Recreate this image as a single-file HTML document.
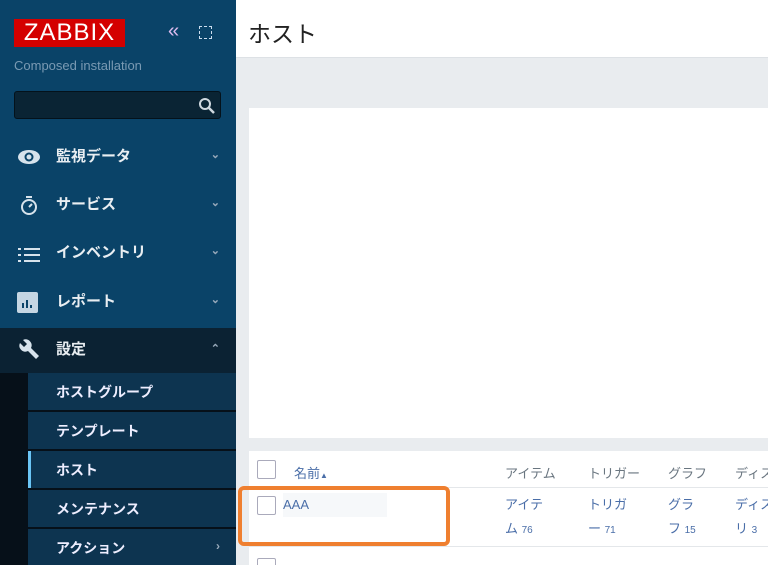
<!DOCTYPE html><html><head><meta charset="utf-8"><style>
*{margin:0;padding:0;box-sizing:border-box}
html,body{width:768px;height:565px;overflow:hidden}
body{position:relative;background:#e9ecef;font-family:"Liberation Sans","Noto Sans CJK JP",sans-serif}
.sb{position:absolute;left:0;top:0;width:236px;height:565px;background:#0a4368}
.logo{position:absolute;left:14px;top:19px;width:111px;height:28px;background:#d40000;color:#fff;font-size:24px;line-height:28px;text-align:center;letter-spacing:1px}
.sub{position:absolute;left:14px;top:58px;color:#7a9ab3;font-size:13px}
.srch{position:absolute;left:14px;top:91px;width:207px;height:28px;background:#0a2434;border:1px solid #04121b;border-radius:3px}
.mi{position:absolute;left:0;width:236px;height:48px;color:#e9eef2;font-size:15px;font-weight:bold;white-space:nowrap}
.mi .t{position:absolute;left:56px;top:13px;line-height:20px}
.mi .c{position:absolute;right:16px;top:14px;font-size:11px;color:#9ab}
.set{background:#0b2233}
.subm{position:absolute;left:0;top:373px;width:236px;height:192px;background:#061019;overflow:hidden}
.si{position:absolute;left:28px;width:208px;height:37px;background:#0d3450;color:#eef;font-size:14px;font-weight:bold;padding:9px 0 0 28px;white-space:nowrap}
.hdr{position:absolute;left:236px;top:0;width:532px;height:58px;background:#fff;border-bottom:1px solid #dde1e5}
.hdr span{position:absolute;left:12px;top:15px;font-size:23px;color:#222}
.p1{position:absolute;left:249px;top:108px;width:519px;height:330px;background:#fff}
.p2{position:absolute;left:249px;top:451px;width:519px;height:114px;background:#fff}
.cb{position:absolute;width:19px;height:19px;border:1px solid #aab;border-radius:2px;background:#fff}
.th{position:absolute;top:463px;font-size:13px;color:#6a7680;white-space:nowrap}
.td{position:absolute;font-size:13px;color:#4a6ea8;line-height:24px;white-space:nowrap}
.td small{font-size:10px}
</style></head><body>
<div class="sb">
<div class="logo">ZABBIX</div>
<div style="position:absolute;left:168px;top:20px;color:#dbe;font-size:20px">«</div>
<div style="position:absolute;left:199px;top:26px;width:13px;height:13px;border:1px dashed #cde"></div>
<div class="sub">Composed installation</div>
<div class="srch"><svg style="position:absolute;right:5px;top:5px" width="17" height="17" viewBox="0 0 17 17"><circle cx="7" cy="7" r="5" fill="none" stroke="#cfd8df" stroke-width="2"/><path d="M11 11l5 5" stroke="#cfd8df" stroke-width="2.5"/></svg></div>
<div class="mi" style="top:134px"><svg style="position:absolute;left:17px;top:15px" width="24" height="16"><ellipse cx="12" cy="8" rx="11" ry="7" fill="#d7e3ec"/><circle cx="12" cy="8" r="4.5" fill="#0a4368"/><circle cx="12" cy="8" r="2.5" fill="#d7e3ec"/></svg><span class="t">監視データ</span><span class="c">⌄</span></div>
<div class="mi" style="top:182px"><svg style="position:absolute;left:19px;top:13px" width="20" height="22"><circle cx="10" cy="12" r="7" fill="none" stroke="#d7e3ec" stroke-width="2"/><path d="M7 2h6M10 12l3-3" stroke="#d7e3ec" stroke-width="2"/></svg><span class="t">サービス</span><span class="c">⌄</span></div>
<div class="mi" style="top:230px"><svg style="position:absolute;left:18px;top:18px" width="22" height="14"><path d="M0 1h3M6 1h16M0 7h3M6 7h16M0 13h3M6 13h16" stroke="#d7e3ec" stroke-width="2"/></svg><span class="t">インベントリ</span><span class="c">⌄</span></div>
<div class="mi" style="top:279px"><div style="position:absolute;left:17px;top:13px;width:21px;height:21px;background:#c5d6e3;border-radius:2px"></div><svg style="position:absolute;left:17px;top:13px" width="21" height="21"><path d="M6 16v-5M10 16v-8M14 16v-3" stroke="#0a4368" stroke-width="2"/></svg><span class="t">レポート</span><span class="c">⌄</span></div>
<div class="mi set" style="top:328px;height:45px"><svg style="position:absolute;left:17px;top:11px" width="24" height="24"><path d="M3 4a6 6 0 0 0 8 8l8 8 3-3-8-8a6 6 0 0 0-8-8l4 4-3 3z" fill="#d7e3ec"/></svg><span class="t" style="top:12px">設定</span><span class="c">⌃</span></div>
</div>
<div class="subm">
<div class="si" style="top:0">ホストグループ</div>
<div class="si" style="top:39px">テンプレート</div>
<div class="si" style="top:78px">ホスト</div>
<div style="position:absolute;left:28px;top:78px;width:3px;height:37px;background:#6ac5f5"></div>
<div class="si" style="top:117px">メンテナンス</div>
<div class="si" style="top:156px">アクション<span style="position:absolute;right:16px;top:10px;font-size:12px;color:#9ab">›</span></div>
</div>
<div class="hdr"><span>ホスト</span></div>
<div class="p1"></div>
<div class="p2"></div>
<div style="position:absolute;left:249px;top:487px;width:519px;height:1px;background:#e4e7ea"></div>
<div style="position:absolute;left:249px;top:546px;width:519px;height:1px;background:#e4e7ea"></div>
<div class="cb" style="left:257px;top:460px"></div>
<div class="th" style="left:294px;color:#4a6ea8">名前<small style="font-size:8px">▲</small></div>
<div class="th" style="left:505px">アイテム</div>
<div class="th" style="left:588px">トリガー</div>
<div class="th" style="left:668px">グラフ</div>
<div class="th" style="left:735px">ディス</div>
<div class="cb" style="left:257px;top:496px"></div>
<div class="td" style="left:283px;top:493px;width:104px;background:#f6f8fa">AAA</div>
<div class="td" style="left:505px;top:493px">アイテ<br>ム <small>76</small></div>
<div class="td" style="left:588px;top:493px">トリガ<br>ー <small>71</small></div>
<div class="td" style="left:668px;top:493px">グラ<br>フ <small>15</small></div>
<div class="td" style="left:735px;top:493px">ディス<br>リ <small>3</small></div>
<div class="cb" style="left:257px;top:558px"></div>
<div style="position:absolute;left:238px;top:486px;width:212px;height:60px;border:4px solid #ef7f2f;border-radius:6px"></div>
</body></html>
